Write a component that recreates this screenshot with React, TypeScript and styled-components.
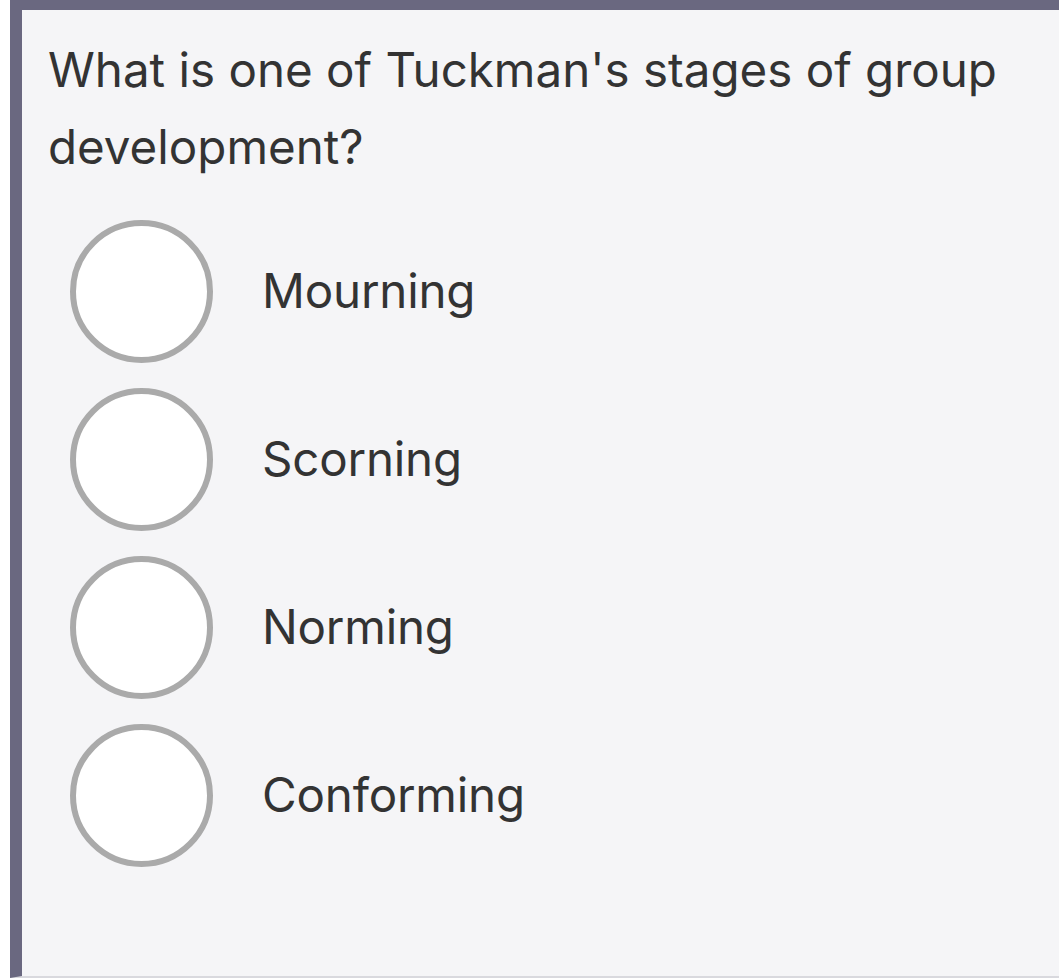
import { ReactElement } from 'react';
import styled, { createGlobalStyle } from 'styled-components';

const GlobalStyle = createGlobalStyle`
  html, body {
    margin: 0;
    padding: 0;
    background: #ffffff;
  }
  * {
    box-sizing: border-box;
  }
`;

const Page = styled.div`
  padding-left: 10px;
  background: #ffffff;
`;

const Card = styled.div`
  height: 978px;
  background: #f5f5f7;
  border-top: 10px solid #6a6880;
  border-left: 12px solid #6a6880;
  border-bottom: 2px solid #d9d9de;
  padding: 22px 26px 0 26px;
  font-family: Inter, 'Noto Sans', sans-serif;
  color: #333333;
`;

const Question = styled.h2`
  margin: 0;
  font-size: 47.5px;
  font-weight: 400;
  line-height: 76.8px;
`;

const Options = styled.div`
  display: flex;
  flex-direction: column;
  gap: 25px;
  margin-top: 34px;
  padding-left: 22px;
`;

const Option = styled.label`
  display: flex;
  align-items: center;
  gap: 49px;
  cursor: pointer;
`;

const Radio = styled.span`
  width: 143px;
  height: 143px;
  flex-shrink: 0;
  border-radius: 50%;
  border: 6px solid #aaaaaa;
  background: #ffffff;
`;

const Label = styled.span`
  font-size: 47.5px;
  line-height: 1;
  letter-spacing: -0.2px;
`;

const answers = ['Mourning', 'Scorning', 'Norming', 'Conforming'];

const App = (): ReactElement => {
  return (
    <Page>
      <GlobalStyle />
      <Card>
        <Question>What is one of Tuckman's stages of group development?</Question>
        <Options>
          {answers.map((answer) => (
            <Option key={answer}>
              <Radio />
              <Label>{answer}</Label>
            </Option>
          ))}
        </Options>
      </Card>
    </Page>
  );
};

export default App;
